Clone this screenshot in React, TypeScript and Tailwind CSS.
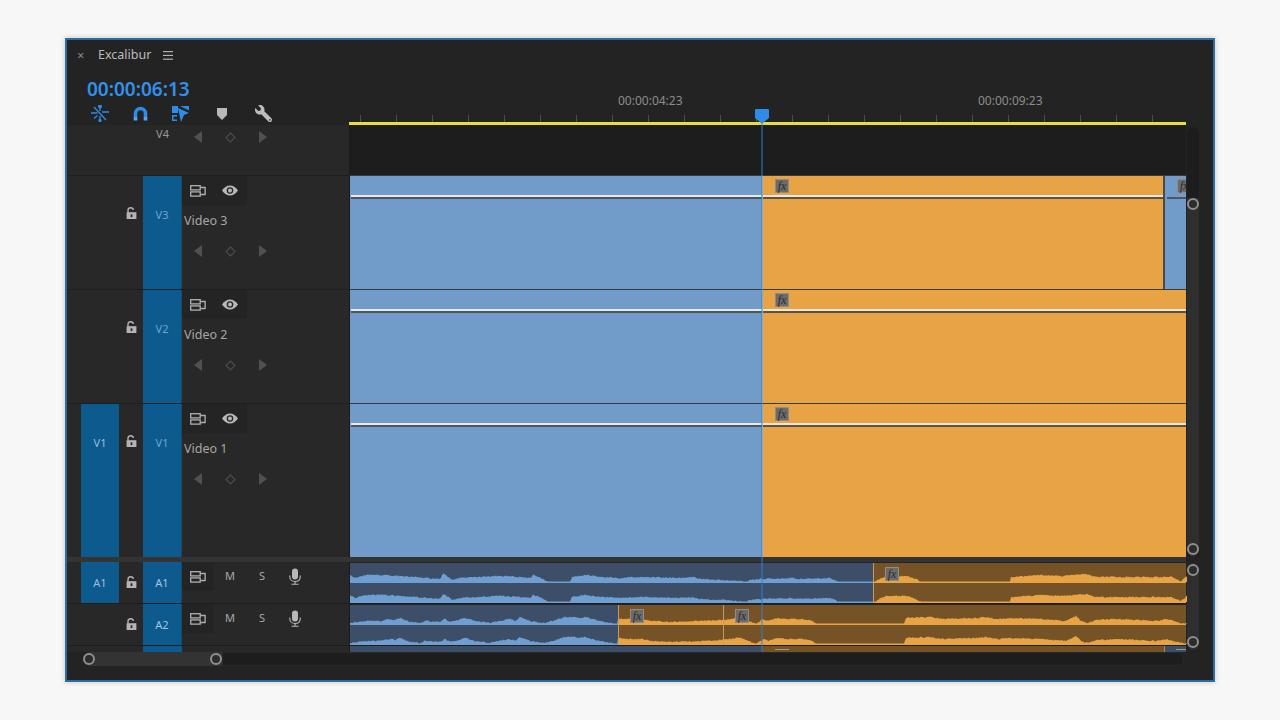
import { FaWrench } from 'react-icons/fa';

type Pt = [number, number];

const A1_WAVE: Pt[] = [
  [350, 7], [355, 4], [365, 7], [385, 7], [400, 6], [440, 3], [443, 8], [447, 6], [452, 2], [458, 4], [480, 5], [500, 6],
  [520, 5], [530, 4], [533, 7], [540, 5], [548, 0], [570, 0], [572, 5], [585, 7], [600, 5], [620, 4], [640, 5], [680, 4],
  [692, 5], [700, 3], [740, 1], [745, 0], [750, 2], [760, 3], [790, 4], [800, 3], [830, 4], [835, 2], [838, 0], [873, 0],
  [878, 3], [885, 6], [905, 6], [915, 3], [920, 0], [1009, 0], [1010, 5], [1040, 7], [1060, 6], [1085, 8], [1095, 5],
  [1140, 5], [1170, 5], [1180, 1], [1186, 6],
];

const A2_WAVE: Pt[] = [
  [350, 1], [365, 3], [380, 3], [390, 5], [395, 4], [400, 6], [410, 2], [420, 1], [425, 3], [440, 2], [445, 5], [450, 2],
  [465, 6], [475, 3], [490, 1], [500, 3], [510, 5], [515, 3], [520, 7], [530, 3], [545, 1], [556, 4], [565, 7], [575, 7],
  [580, 6], [585, 7], [595, 4], [610, 1], [617, 0], [618, 6], [625, 5], [640, 5], [650, 3], [670, 2], [700, 3], [722, 4],
  [730, 5], [738, 7], [745, 4], [755, 0], [762, 5], [768, 3], [775, 6], [790, 5], [800, 5], [812, 3], [815, 0], [903, 0],
  [905, 6], [930, 7], [940, 5], [975, 6], [985, 7], [995, 5], [1010, 6], [1040, 5], [1065, 3], [1075, 8], [1080, 3],
  [1087, 1], [1095, 4], [1120, 5], [1155, 3], [1165, 5], [1172, 3], [1185, 0],
];

function envelope(pts: Pt[], x: number) {
  for (let i = 1; i < pts.length; i++) {
    const [x0, h0] = pts[i - 1];
    const [x1, h1] = pts[i];
    if (x <= x1) return h0 + ((h1 - h0) * (x - x0)) / (x1 - x0);
  }
  return 0;
}

function jitter(x: number) {
  const v = Math.sin(x * 12.9898) * 43758.5453;
  return v - Math.floor(v) - 0.5;
}

function Wave({ pts, from, to, seed, color }: { pts: Pt[]; from: number; to: number; seed: number; color: string }) {
  let d = `M${from} 19`;
  for (let x = from; x <= to; x++) {
    const h = envelope(pts, x);
    const n = h > 0.5 ? jitter(x + seed) * 1.4 : 0;
    d += `L${x} ${(19 - Math.max(h + n, 0.4)).toFixed(1)}`;
  }
  d += `L${to} 19Z`;
  return (
    <svg width={to - from} height={19} viewBox={`${from} 0 ${to - from} 19`} className="block">
      <path d={d} fill={color} />
    </svg>
  );
}

function Fx({ className }: { className: string }) {
  return (
    <div
      className={`absolute flex h-[14px] w-[14px] items-center justify-center border border-[#8c8c8c] bg-[#6b6b6b] font-['Liberation_Serif',serif] text-[12px] leading-none text-[#2b2b2b] italic ${className}`}
    >
      fx
    </div>
  );
}

function AudioClip({ from, to, tone, fx, first }: { from: number; to: number; tone: 'blue' | 'orange'; fx?: boolean; first?: boolean }) {
  const blue = tone === 'blue';
  const color = blue ? '#6f9fd2' : '#e8a444';
  const pts = first ? A1_WAVE : A2_WAVE;
  return (
    <div
      className={`relative shrink-0 ${blue ? 'bg-[#3d4e68]' : 'border-l border-[#c99a5a] bg-[#765327]'}`}
      style={{ width: to - from }}
    >
      <Wave pts={pts} from={from} to={to} seed={1} color={color} />
      <div className={`h-px ${blue ? 'bg-[#6f9fd2]' : 'bg-[#e8a444]'}`} />
      <Wave pts={pts} from={from} to={to} seed={2.4} color={color} />
      <div className={`h-px ${blue ? 'bg-[#6f9fd2]' : 'bg-[#e8a444]'}`} />
      {fx && <Fx className="top-[4px] left-[11px]" />}
    </div>
  );
}

function VideoClips({ end }: { end?: boolean }) {
  return (
    <div className="flex h-full w-full bg-[#e8a344]">
      <div className="flex h-full w-[412px] shrink-0 flex-col bg-[#719cca] pt-[19px] pl-px">
        <div className="h-[2px] bg-[#e8e8e8]" />
        <div className="h-[2px] bg-[#50545c]" />
      </div>
      <div className="relative flex h-full flex-1 flex-col border-l border-[#d8d8d8] pt-[19px]">
        <div className="h-[2px] bg-[#f0e6d6]" />
        <div className="h-[2px] bg-[#5b5248]" />
        <Fx className="top-[3px] left-[12px]" />
      </div>
      {end && (
        <div className="relative flex h-full w-[23px] shrink-0 flex-col overflow-hidden border-l-2 border-[#4a4a48] bg-[#719cca] pt-[21px] pl-[2px]">
          <div className="h-[2px] bg-[#50545c]" />
          <Fx className="top-[3px] left-[12px]" />
        </div>
      )}
    </div>
  );
}

function SyncIcon() {
  return (
    <svg width="16" height="12" viewBox="0 0 16 12" fill="none" stroke="#b0b0b0" strokeWidth="1.3">
      <rect x="0.7" y="0.7" width="9.5" height="4.2" />
      <rect x="0.7" y="6.9" width="9.5" height="4.2" />
      <path d="M10.5 2.5h4.6v7h-4.6" />
    </svg>
  );
}

function EyeIcon() {
  return (
    <svg width="16" height="11" viewBox="0 0 16 11">
      <path d="M0 5.500C2.500 2 5 .4 8 .4s5.500 1.600 8 5.100c-2.500 3.500-5 5.100-8 5.100S2.500 9 0 5.500z" fill="#b8b8b8" />
      <circle cx="8" cy="5.500" r="3.300" fill="#262626" />
      <circle cx="8" cy="5.500" r="2" fill="#b8b8b8" />
    </svg>
  );
}

function LockIcon() {
  return (
    <svg width="11" height="12" viewBox="0 0 11 12">
      <path d="M2 5.500V3.200C2 1.600 3.200.7 4.700.7c1.400 0 2.500.8 2.700 2.100" fill="none" stroke="#b4b4b4" strokeWidth="1.400" />
      <path d="M.6 5.200h9.800V12H.6z" fill="#b4b4b4" />
      <rect x="4.600" y="7.300" width="1.800" height="2.800" fill="#282828" />
    </svg>
  );
}

function MicIcon() {
  return (
    <svg width="12" height="17" viewBox="0 0 12 17">
      <rect x="3" y="0.500" width="6" height="11" rx="3" fill="#b8b8b8" />
      <path d="M.8 7.500v1.200C.8 11.600 3 13.500 6 13.500s5.200-1.900 5.200-4.800V7.500M6 13.500v2.500M2.500 16.300h7" fill="none" stroke="#b8b8b8" strokeWidth="1.100" />
    </svg>
  );
}

function KeyframeNav({ className }: { className: string }) {
  return (
    <div className={`flex h-[12px] w-[85px] items-center justify-between pl-[12px] ${className}`}>
      <svg width="8" height="12" viewBox="0 0 8 12"><path d="M8 0v12L0 6z" fill="#505050" /></svg>
      <svg width="11" height="11" viewBox="0 0 11 11" fill="none"><path d="M5.500 1 10 5.500 5.500 10 1 5.500z" stroke="#4c4c4c" strokeWidth="1.100" /></svg>
      <svg width="8" height="12" viewBox="0 0 8 12"><path d="M0 0v12l8-6z" fill="#505050" /></svg>
    </div>
  );
}

type HeadProps = {
  label: string;
  name?: string;
  patch?: string;
  audio?: boolean;
  lockTop: string;
  labelTop: string;
};

function VideoControls({ name }: { name: string }) {
  return (
    <div className="flex flex-col">
      <div className="flex h-[29px] w-[65px] items-center bg-[#242424]">
        <div className="flex w-[32px] justify-center"><SyncIcon /></div>
        <div className="flex w-[32px] justify-center"><EyeIcon /></div>
      </div>
      <div className="mt-[6px] pl-[2px] text-[12.5px] leading-[20px] text-[#a6a6a6]">{name}</div>
      <KeyframeNav className="mt-[14px]" />
    </div>
  );
}

function AudioControls() {
  return (
    <div className="flex h-[29px] items-center text-[11px] text-[#a8a8a8]">
      <div className="flex h-full w-[32px] items-center justify-center bg-[#242424]"><SyncIcon /></div>
      <div className="w-[32px] text-center">M</div>
      <div className="w-[32px] text-center">S</div>
      <div className="flex w-[33px] justify-center"><MicIcon /></div>
    </div>
  );
}

function TrackHead({ label, name, patch, audio, lockTop, labelTop }: HeadProps) {
  return (
    <div className="flex h-full w-[283px] shrink-0 border-r border-[#1a1a1a] bg-[#282828]">
      <div className="w-[14px]" />
      <div className={`w-[38px] text-center text-[11px] text-[#9dbbd6] ${patch ? 'bg-[#0d5a8f]' : ''}`} style={{ paddingTop: labelTop }}>
        {patch}
      </div>
      <div className="flex w-[24px] justify-center" style={{ paddingTop: lockTop }}><LockIcon /></div>
      <div
        className={`w-[39px] border-r border-dotted border-[#1d3a50] bg-[#0d5a8f] text-center text-[11px] ${audio ? 'text-[#a7c4dd]' : 'text-[#6ea4d6]'}`}
        style={{ paddingTop: labelTop }}
      >
        {label}
      </div>
      <div className="flex-1">{audio ? <AudioControls /> : <VideoControls name={name ?? ''} />}</div>
    </div>
  );
}

function VideoRow({ height, label, name, patch, end }: { height: string; label: string; name: string; patch?: string; end?: boolean }) {
  return (
    <div className={`flex ${height}`}>
      <div className="flex flex-col border-t border-[#1f1f1f]">
        <TrackHead label={label} name={name} patch={patch} lockTop="31px" labelTop="31px" />
      </div>
      <div className="w-[836px] shrink-0 border-t border-[#3a3a3a]"><VideoClips end={end} /></div>
    </div>
  );
}

function Knob() {
  return <div className="h-[12px] w-[12px] shrink-0 rounded-full border-2 border-[#8f8f8f] bg-[#2c2c2c]" />;
}

function Ruler() {
  const ticks: number[] = [];
  for (let x = 14; x < 837; x += 36) ticks.push(x - 3);
  return (
    <svg width="837" height="15" viewBox="0 0 837 15" className="block">
      {ticks.map((x) => {
        const major = x === 301 || x === 661;
        return <rect key={x} x={x} y={major ? 1 : 8} width="1" height={major ? 14 : 7} fill={major ? '#5f5f5f' : '#4c4c4c'} />;
      })}
    </svg>
  );
}

export default function App() {
  return (
    <div className="h-[720px] w-[1280px] overflow-hidden bg-[#f7f7f7] pt-[38px] pl-[65px] font-['Noto_Sans',sans-serif]">
      <div className="relative flex h-[644px] w-[1150px] flex-col border-2 border-[#2b6ca6] bg-[#232323] shadow-[0_0_6px_rgba(0,0,0,0.2)]">
        {/* header + ruler */}
        <div className="flex h-[85px] shrink-0">
          <div className="w-[282px] shrink-0">
            <div className="flex h-[31px] items-center pl-[10px]">
              <span className="w-[21px] text-[13px] leading-none text-[#8a8a8a]">×</span>
              <span className="text-[12.5px] text-[#bcbcbc]">Excalibur</span>
              <svg width="10" height="9" viewBox="0 0 10 9" className="ml-[12px]" fill="#b0b0b0">
                <rect width="10" height="1.200" /><rect y="3.800" width="10" height="1.200" /><rect y="7.600" width="10" height="1.200" />
              </svg>
            </div>
            <div className="mt-[5px] pl-[20px] text-[19px] leading-[26px] font-semibold text-[#3390ea]">00:00:06:13</div>
            <div className="flex h-[23px] items-center pl-[24px]">
              <svg width="18" height="17" viewBox="0 0 18 17" fill="none" stroke="#2e8ce6" strokeWidth="1.300">
                <path d="M9 1v5M0 8h6.500M11 7h7M3 2l12 13M3 13.500l3.500-3M9 11v5" />
                <circle cx="9" cy="1.500" r="1.300" fill="#2e8ce6" />
                <circle cx="9" cy="15.500" r="1" fill="#2e8ce6" />
              </svg>
              <svg width="15" height="15" viewBox="0 0 15 15" className="ml-[24px]" fill="none">
                <path d="M2.500 11V7.500a5 5 0 0 1 10 0V11" stroke="#2e8ce6" strokeWidth="3.600" />
                <path d="M2.500 11v3.500M12.500 11v3.500" stroke="#5aa6ee" strokeWidth="3.600" />
              </svg>
              <svg width="18" height="16" viewBox="0 0 18 16" className="ml-[24px]">
                <path d="M0 0h6v7H0zM0 9h5v1.500H1.500v3H5V15H0z" fill="#2e8ce6" />
                <path d="M8 0h9v4.500z" fill="#2e8ce6" />
                <path d="M6 2l11 5-5 2-3 7z" fill="#2e8ce6" />
              </svg>
              <svg width="10" height="12" viewBox="0 0 10 12" className="ml-[27px]">
                <path d="M0 0h10v7l-5 5-5-5z" fill="#b8b8b8" />
              </svg>
              <FaWrench className="ml-[28px] h-[17px] w-[17px] -scale-x-100 text-[#bdbdbd]" />
            </div>
          </div>
          <div className="flex w-[837px] shrink-0 flex-col justify-end">
            <div className="flex pl-[269px] text-[12px] leading-[16px] text-[#8c8c8c]">
              <span className="w-[68px] whitespace-nowrap">00:00:04:23</span>
              <span className="ml-[292px] w-[68px] whitespace-nowrap">00:00:09:23</span>
            </div>
            <div className="-mt-[2px]"><Ruler /></div>
            <div className="h-[3px] bg-[#e8dd3c]" />
          </div>
        </div>

        {/* tracks + vertical scrollbars */}
        <div className="flex">
          <div className="flex w-[1119px] shrink-0 flex-col">
            <div className="flex h-[50px]">
              <div className="flex w-[283px] shrink-0 border-r border-[#1a1a1a] bg-[#282828]">
                <div className="w-[76px]" />
                <div className="w-[39px] pt-px text-center text-[11px] text-[#9a9a9a]">V4</div>
                <KeyframeNav className="mt-[6px]" />
              </div>
              <div className="w-[836px] bg-[#1d1d1d]" />
            </div>
            <VideoRow height="h-[114px]" label="V3" name="Video 3" end />
            <VideoRow height="h-[114px]" label="V2" name="Video 2" />
            <VideoRow height="h-[154px]" label="V1" name="Video 1" patch="V1" />
            <div className="h-[5px] bg-[#343434]" />
            <div className="flex h-[42px] border-b border-[#1e1e1e]">
              <TrackHead label="A1" patch="A1" audio lockTop="14px" labelTop="13px" />
              <div className="flex h-[41px] w-[836px] shrink-0 pt-px">
                <AudioClip from={350} to={873} tone="blue" first />
                <AudioClip from={873} to={1186} tone="orange" fx first />
              </div>
            </div>
            <div className="flex h-[42px] border-b border-[#1e1e1e]">
              <TrackHead label="A2" audio lockTop="14px" labelTop="13px" />
              <div className="flex h-[41px] w-[836px] shrink-0 pt-px">
                <AudioClip from={350} to={618} tone="blue" />
                <AudioClip from={618} to={723} tone="orange" fx />
                <AudioClip from={723} to={1186} tone="orange" fx />
              </div>
            </div>
            <div className="flex h-[6px] overflow-hidden">
              <div className="flex w-[283px] shrink-0 border-r border-[#1a1a1a] bg-[#282828] pl-[76px]">
                <div className="w-[39px] bg-[#0d5a8f]" />
              </div>
              <div className="flex w-[836px] shrink-0">
                <div className="w-[412px] shrink-0 bg-[#3d4e68]" />
                <div className="flex-1 bg-[#765327] pt-[3px] pl-[13px]">
                  <div className="h-px w-[14px] bg-[#9a9a9a]" />
                </div>
                <div className="w-[22px] shrink-0 border-l border-[#b08a55] bg-[#3d4e68] pt-[3px] pl-[11px]">
                  <div className="h-px bg-[#9a9a9a]" />
                </div>
              </div>
            </div>
          </div>

          <div className="flex w-[27px] flex-col pt-[2px] pl-px">
            <div className="flex h-[430px] w-[12px] flex-col rounded-t-[6px] bg-[#1d1d1d]">
              <div className="h-[71px]" />
              <div className="flex flex-1 flex-col items-center justify-between rounded-b-[6px] bg-[#2e2e2e] pb-[2px]">
                <Knob />
                <Knob />
              </div>
            </div>
            <div className="mt-[6px] flex h-[87px] w-[12px] flex-col items-center justify-between rounded-[6px] bg-[#2e2e2e] pt-px pb-[2px]">
              <Knob />
              <Knob />
            </div>
          </div>
        </div>

        {/* horizontal scrollbar */}
        <div className="flex h-[14px] pl-[16px]">
          <div className="flex h-[14px] w-[139px] items-center justify-between rounded-l-[7px] bg-[#333333]">
            <Knob />
            <Knob />
          </div>
          <div className="h-[14px] w-[962px] rounded-r-[7px] border border-[#2a2a2a] bg-[#1d1d1d]" />
        </div>

        {/* playhead */}
        <div className="absolute top-[69px] left-[688px] flex h-[543px] w-[14px] flex-col items-center">
          <svg width="14" height="14" viewBox="0 0 14 14" className="shrink-0">
            <path d="M1 0h12a1 1 0 0 1 1 1v8l-6 5H6L0 9V1a1 1 0 0 1 1-1z" fill="#2e8ce6" />
          </svg>
          <div className="w-px flex-1 -translate-x-[0.5px] bg-[#2f7fcf]" />
        </div>
      </div>
    </div>
  );
}
